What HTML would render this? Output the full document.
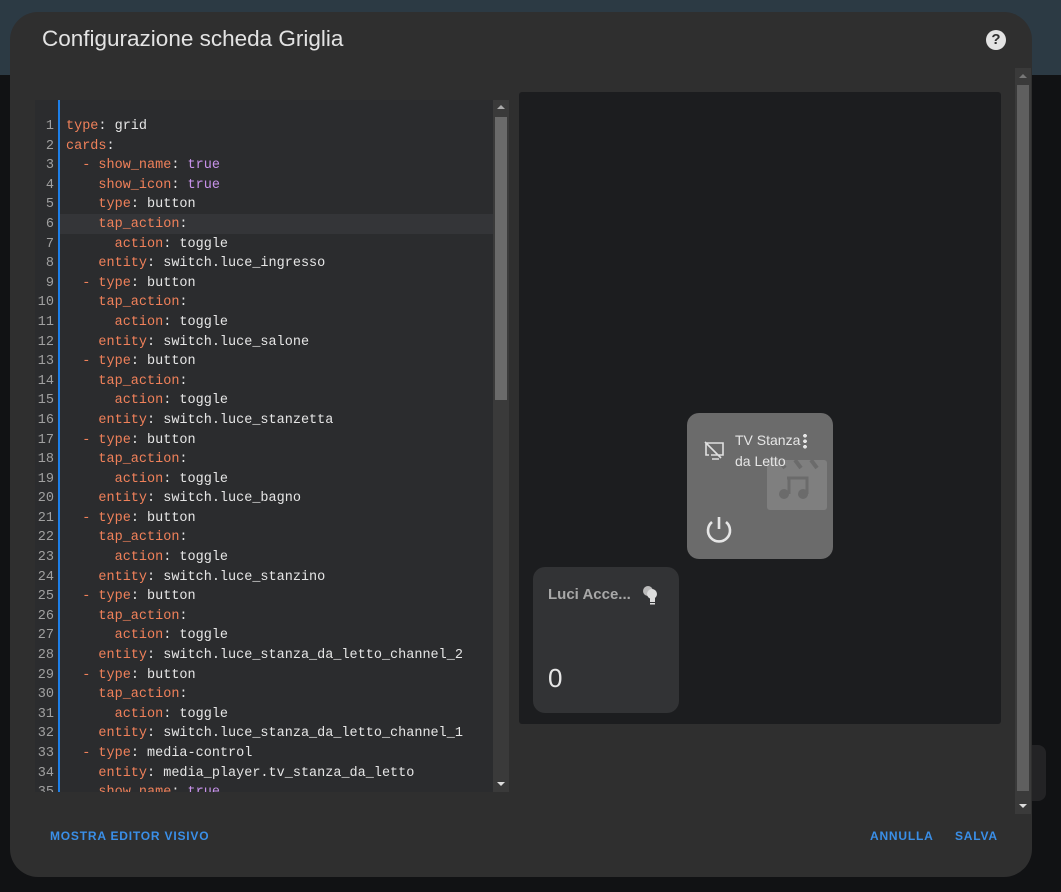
<!DOCTYPE html>
<html><head><meta charset="utf-8"><style>
*{box-sizing:border-box;margin:0;padding:0}
body{width:1061px;height:892px;overflow:hidden;background:#111214;position:relative;font-family:"Liberation Sans",sans-serif}
.top{position:absolute;left:0;top:0;width:1061px;height:75px;background:#2c3a44}
.dlg{position:absolute;left:10px;top:12px;width:1022px;height:865px;background:#2f2f2f;border-radius:28px}
.title{position:absolute;left:42px;top:26px;color:#e3e3e3;font-size:22.5px}
.help{position:absolute;left:986px;top:30px;width:20px;height:20px;border-radius:50%;background:#e3e3e3;color:#2f2f2f;font-weight:bold;font-size:15px;text-align:center;line-height:20px}
.ed{position:absolute;left:35px;top:100px;width:474px;height:692px;background:#2b2c2e;overflow:hidden}
.bl{position:absolute;left:23px;top:0;width:2px;height:692px;background:#1d7fe8}
.hl{position:absolute;left:25px;top:114px;width:433px;height:20px;background:#343538}
.code{position:absolute;left:0;top:17px;font-family:"Liberation Mono",monospace;font-size:13.5px;line-height:19.6px;color:#e6e6e6;white-space:pre}
.ln{display:inline-block;width:19px;text-align:right;color:#a0a0a0;margin-right:12px}
.k{color:#f0815a}.t{color:#c792ea}
.sb{position:absolute;left:458px;top:0;width:16px;height:692px;background:#3a3a3a}
.th{position:absolute;left:2px;top:17px;width:12px;height:283px;background:#6a6a6a}
.pv{position:absolute;left:519px;top:92px;width:482px;height:632px;background:#1c1d1f;border-radius:3px}
.c1{position:absolute;left:687px;top:413px;width:146px;height:146px;background:#6b6b6b;border-radius:12px}
.c2{position:absolute;left:533px;top:567px;width:146px;height:146px;background:#323335;border-radius:12px}
.osb{position:absolute;left:1015px;top:68px;width:16px;height:746px;background:#3a3a3a}
.oth{position:absolute;left:1017px;top:85px;width:12px;height:706px;background:#5f5f5f}
.btn{position:absolute;top:829px;color:#3a8fe8;font-size:12px;font-weight:bold;letter-spacing:.8px}
</style></head><body>
<div class="top"></div>
<div style="position:absolute;left:1030px;top:745px;width:16px;height:56px;background:#232325;border-radius:0 8px 8px 0"></div>
<div class="dlg"></div>
<div class="title">Configurazione scheda Griglia</div>
<div class="help">?</div>
<div class="ed">
<div class="hl"></div>
<div class="bl"></div>
<div class="code"><span class="ln">1</span><span class="k">type</span>: grid
<span class="ln">2</span><span class="k">cards</span>:
<span class="ln">3</span>  <span class="k">-</span> <span class="k">show_name</span>: <span class="t">true</span>
<span class="ln">4</span>    <span class="k">show_icon</span>: <span class="t">true</span>
<span class="ln">5</span>    <span class="k">type</span>: button
<span class="ln">6</span>    <span class="k">tap_action</span>:
<span class="ln">7</span>      <span class="k">action</span>: toggle
<span class="ln">8</span>    <span class="k">entity</span>: switch.luce_ingresso
<span class="ln">9</span>  <span class="k">-</span> <span class="k">type</span>: button
<span class="ln">10</span>    <span class="k">tap_action</span>:
<span class="ln">11</span>      <span class="k">action</span>: toggle
<span class="ln">12</span>    <span class="k">entity</span>: switch.luce_salone
<span class="ln">13</span>  <span class="k">-</span> <span class="k">type</span>: button
<span class="ln">14</span>    <span class="k">tap_action</span>:
<span class="ln">15</span>      <span class="k">action</span>: toggle
<span class="ln">16</span>    <span class="k">entity</span>: switch.luce_stanzetta
<span class="ln">17</span>  <span class="k">-</span> <span class="k">type</span>: button
<span class="ln">18</span>    <span class="k">tap_action</span>:
<span class="ln">19</span>      <span class="k">action</span>: toggle
<span class="ln">20</span>    <span class="k">entity</span>: switch.luce_bagno
<span class="ln">21</span>  <span class="k">-</span> <span class="k">type</span>: button
<span class="ln">22</span>    <span class="k">tap_action</span>:
<span class="ln">23</span>      <span class="k">action</span>: toggle
<span class="ln">24</span>    <span class="k">entity</span>: switch.luce_stanzino
<span class="ln">25</span>  <span class="k">-</span> <span class="k">type</span>: button
<span class="ln">26</span>    <span class="k">tap_action</span>:
<span class="ln">27</span>      <span class="k">action</span>: toggle
<span class="ln">28</span>    <span class="k">entity</span>: switch.luce_stanza_da_letto_channel_2
<span class="ln">29</span>  <span class="k">-</span> <span class="k">type</span>: button
<span class="ln">30</span>    <span class="k">tap_action</span>:
<span class="ln">31</span>      <span class="k">action</span>: toggle
<span class="ln">32</span>    <span class="k">entity</span>: switch.luce_stanza_da_letto_channel_1
<span class="ln">33</span>  <span class="k">-</span> <span class="k">type</span>: media-control
<span class="ln">34</span>    <span class="k">entity</span>: media_player.tv_stanza_da_letto
<span class="ln">35</span>    <span class="k">show_name</span>: <span class="t">true</span></div>
<div class="sb"><div class="th"></div>
<div style="position:absolute;left:4px;top:5px;border:4px solid transparent;border-bottom:4px solid #aaa;border-top:none"></div>
<div style="position:absolute;left:4px;top:682px;border:4px solid transparent;border-top:4px solid #ddd;border-bottom:none"></div></div>
</div>
<div class="pv"></div>
<div class="c1">
<svg style="position:absolute;left:78px;top:47px" width="64" height="52" viewBox="0 0 64 52"><rect x="2" y="0" width="60" height="50" rx="3" fill="#7f7f7f"/><path d="M14 0l6 8M30 0l6 8M46 0l6 8" stroke="#6b6b6b" stroke-width="4"/><path d="M22 18h20v16" stroke="#6b6b6b" stroke-width="3" fill="none"/><circle cx="19" cy="34" r="5" fill="#6b6b6b"/><circle cx="38" cy="34" r="5" fill="#6b6b6b"/><path d="M24 18v16" stroke="#6b6b6b" stroke-width="3"/></svg>
<svg style="position:absolute;left:16px;top:26px" width="24" height="24" viewBox="0 0 24 24"><path d="M3 4h17v12H8M3 4v12h3M2 3l16 16M9 20h7" stroke="#e0e0e0" stroke-width="1.6" fill="none"/></svg>
<div style="position:absolute;left:48px;top:17px;color:#e6e6e6;font-size:14px;line-height:21px">TV Stanza<br>da Letto</div>
<div style="position:absolute;left:116px;top:20px;width:4px;height:16px;background:radial-gradient(circle,#e6e6e6 1.8px,transparent 2px) 0 0/4px 5.5px"></div>
<svg style="position:absolute;left:16px;top:101px" width="32" height="32" viewBox="0 0 32 32"><path d="M16 3v12M9 8a11 11 0 1 0 14 0" stroke="#e6e6e6" stroke-width="2.6" fill="none"/></svg>
</div>
<div class="c2">
<div style="position:absolute;left:15px;top:19px;color:#a8a8a8;font-size:15px;font-weight:bold">Luci Acce...</div>
<svg style="position:absolute;left:108px;top:17px" width="20" height="22" viewBox="0 0 20 22"><circle cx="7" cy="7" r="5" fill="#bbb"/><circle cx="11" cy="10" r="5" fill="#ddd"/><rect x="9" y="14" width="5" height="4" fill="#ddd"/><rect x="9" y="19" width="5" height="1.5" fill="#ddd"/></svg>
<div style="position:absolute;left:15px;top:96px;color:#e6e6e6;font-size:26px">0</div>
</div>
<div class="osb"></div><div class="oth"></div>
<div style="position:absolute;left:1019px;top:804px;border:4px solid transparent;border-top:4px solid #ddd;border-bottom:none"></div>
<div style="position:absolute;left:1019px;top:74px;border:4px solid transparent;border-bottom:4px solid #777;border-top:none"></div>
<div class="btn" style="left:50px">MOSTRA EDITOR VISIVO</div>
<div class="btn" style="left:870px">ANNULLA</div>
<div class="btn" style="left:955px">SALVA</div>
</body></html>
